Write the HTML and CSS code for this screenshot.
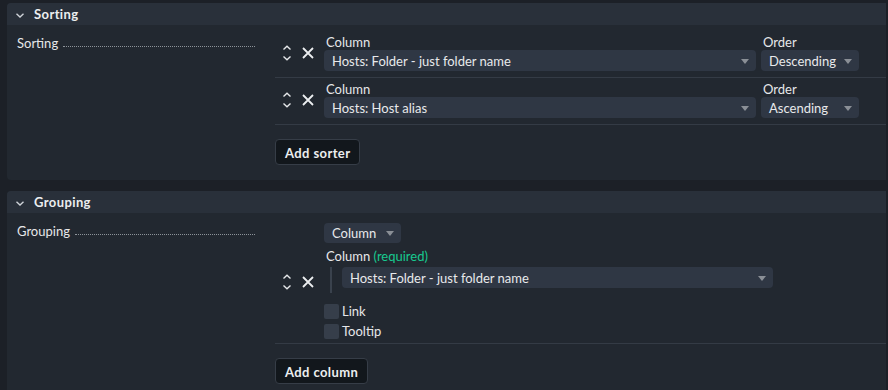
FILE: index.html
```html
<!DOCTYPE html>
<html>
<head>
<meta charset="utf-8">
<link rel="stylesheet" href="styles.css">
</head>
<body>
<div class="page">
  <section class="fold">
    <div class="fold-head">
      <svg class="chev" width="8" height="5" viewBox="0 0 8 5"><path d="M0.5 0.8 L4 4 L7.5 0.8" fill="none" stroke="#cfd3d8" stroke-width="1.4"/></svg>
      <span>Sorting</span>
    </div>
    <div class="fold-body">
      <div class="legend"><span>Sorting</span><span class="leader"></span></div>
      <div class="content">
        <div class="list-row">
          <div class="row-icons">
            <svg class="updown" width="12" height="16" viewBox="0 0 12 16"><path d="M2.5 4.5 L6 1.3 L9.5 4.5 M2.5 11.5 L6 14.7 L9.5 11.5" fill="none" stroke="#e6e8ea" stroke-width="1.4"/></svg>
            <svg class="del" width="12" height="12" viewBox="0 0 12 12"><path d="M1 1 L11 11 M11 1 L1 11" fill="none" stroke="#eceef0" stroke-width="1.8"/></svg>
          </div>
          <div class="fields">
            <div class="field">
              <div class="flabel">Column</div>
              <div class="select col-select">Hosts: Folder - just folder name<i class="arrow"></i></div>
            </div>
            <div class="field">
              <div class="flabel">Order</div>
              <div class="select order-select">Descending<i class="arrow"></i></div>
            </div>
          </div>
        </div>
        <div class="list-row">
          <div class="row-icons">
            <svg class="updown" width="12" height="16" viewBox="0 0 12 16"><path d="M2.5 4.5 L6 1.3 L9.5 4.5 M2.5 11.5 L6 14.7 L9.5 11.5" fill="none" stroke="#e6e8ea" stroke-width="1.4"/></svg>
            <svg class="del" width="12" height="12" viewBox="0 0 12 12"><path d="M1 1 L11 11 M11 1 L1 11" fill="none" stroke="#eceef0" stroke-width="1.8"/></svg>
          </div>
          <div class="fields">
            <div class="field">
              <div class="flabel">Column</div>
              <div class="select col-select">Hosts: Host alias<i class="arrow"></i></div>
            </div>
            <div class="field">
              <div class="flabel">Order</div>
              <div class="select order-select">Ascending<i class="arrow"></i></div>
            </div>
          </div>
        </div>
        <button class="btn">Add sorter</button>
      </div>
    </div>
  </section>

  <section class="fold second">
    <div class="fold-head">
      <svg class="chev" width="8" height="5" viewBox="0 0 8 5"><path d="M0.5 0.8 L4 4 L7.5 0.8" fill="none" stroke="#cfd3d8" stroke-width="1.4"/></svg>
      <span>Grouping</span>
    </div>
    <div class="fold-body">
      <div class="legend"><span>Grouping</span><span class="leader"></span></div>
      <div class="content">
        <div class="list-row group-row">
          <div class="row-icons">
            <svg class="updown" width="12" height="16" viewBox="0 0 12 16"><path d="M2.5 4.5 L6 1.3 L9.5 4.5 M2.5 11.5 L6 14.7 L9.5 11.5" fill="none" stroke="#e6e8ea" stroke-width="1.4"/></svg>
            <svg class="del" width="12" height="12" viewBox="0 0 12 12"><path d="M1 1 L11 11 M11 1 L1 11" fill="none" stroke="#eceef0" stroke-width="1.8"/></svg>
          </div>
          <div class="group-fields">
            <div class="select small-select">Column<i class="arrow"></i></div>
            <div class="flabel">Column <span class="req">(required)</span></div>
            <div class="indent">
              <span class="bar"></span>
              <div class="select group-select">Hosts: Folder - just folder name<i class="arrow"></i></div>
            </div>
            <div class="checks">
              <div class="check"><span class="box"></span>Link</div>
              <div class="check"><span class="box"></span>Tooltip</div>
            </div>
          </div>
        </div>
        <button class="btn">Add column</button>
      </div>
    </div>
  </section>
</div>
</body>
</html>
```

FILE: styles.css
```css
* {
  box-sizing: border-box;
}

html, body {
  margin: 0;
  padding: 0;
  background: #1c2027;
}

body {
  font-family: Lato, "Liberation Sans", sans-serif;
  font-size: 13px;
  color: #e6e7e9;
  overflow: hidden;
}

.page {
  padding: 3px 2px 0 7px;
}

.fold {
  background: #222830;
  border-radius: 4px 0 0 4px;
}

.fold.second {
  margin-top: 11px;
}

.fold-head {
  display: flex;
  align-items: center;
  height: 22px;
  line-height: 21px;
  padding-left: 9px;
  background: #29303a;
  border-radius: 4px 0 0 0;
  font-weight: bold;
  letter-spacing: 0.4px;
  color: #eceef0;
}

.chev {
  margin-right: 10px;
  margin-top: 2px;
}

.fold-body {
  display: flex;
  padding-bottom: 15px;
}

.legend {
  width: 268px;
  flex: none;
  display: flex;
  align-items: flex-start;
  padding: 11px 20px 0 10px;
  line-height: 14px;
  color: #e6e7e9;
}

.leader {
  flex: 1;
  height: 11px;
  margin-left: 5px;
  border-bottom: 1px dotted #8d9399;
}

.content {
  flex: 1;
  padding-top: 6px;
}

.list-row {
  display: flex;
  align-items: center;
  padding: 3px 0 6px 0;
  border-bottom: 1px solid #343b45;
}

.row-icons {
  width: 49px;
  flex: none;
  display: flex;
  align-items: center;
  padding-left: 6px;
}

.updown {
  margin-right: 9px;
}

.fields {
  display: flex;
  gap: 5px;
}

.flabel {
  height: 16px;
  padding-top: 1px;
  line-height: 15px;
  padding-left: 2px;
  color: #e6e7e9;
}

.select {
  position: relative;
  height: 21px;
  padding-top: 1px;
  line-height: 20px;
  padding-left: 8px;
  background: #2f3744;
  border-radius: 4px;
  color: #e8e9eb;
}

.arrow {
  position: absolute;
  right: 7px;
  top: 9px;
  width: 0;
  height: 0;
  border-left: 4px solid transparent;
  border-right: 4px solid transparent;
  border-top: 5px solid #8a8f96;
}

.col-select {
  width: 432px;
}

.order-select {
  width: 98px;
}

.btn {
  display: block;
  margin-top: 14px;
  height: 26px;
  padding: 1px 9px 0 9px;
  background: #12171c;
  border: 1px solid #363d47;
  border-radius: 4px;
  font-family: Lato, "Liberation Sans", sans-serif;
  font-size: 13px;
  font-weight: bold;
  letter-spacing: 0.4px;
  color: #eceef0;
}

.group-row {
  padding: 4px 0 2px 0;
}

.group-fields {
  display: flex;
  flex-direction: column;
  align-items: flex-start;
}

.small-select {
  width: 77px;
  height: 20px;
  line-height: 19px;
  margin-bottom: 5px;
}

.small-select .arrow {
  top: 8px;
}

.req {
  color: #17c98f;
}

.indent {
  display: flex;
  align-items: flex-start;
  height: 26px;
  margin-top: 3px;
  padding-left: 6px;
}

.bar {
  width: 2px;
  height: 26px;
  background: #3a424d;
  margin-right: 10px;
}

.group-select {
  width: 431px;
}

.checks {
  margin-top: 8px;
}

.check {
  display: flex;
  align-items: center;
  height: 20px;
  line-height: 19px;
}

.box {
  width: 15px;
  height: 15px;
  background: #363e4a;
  border-radius: 2px;
  margin-right: 3px;
}
```
